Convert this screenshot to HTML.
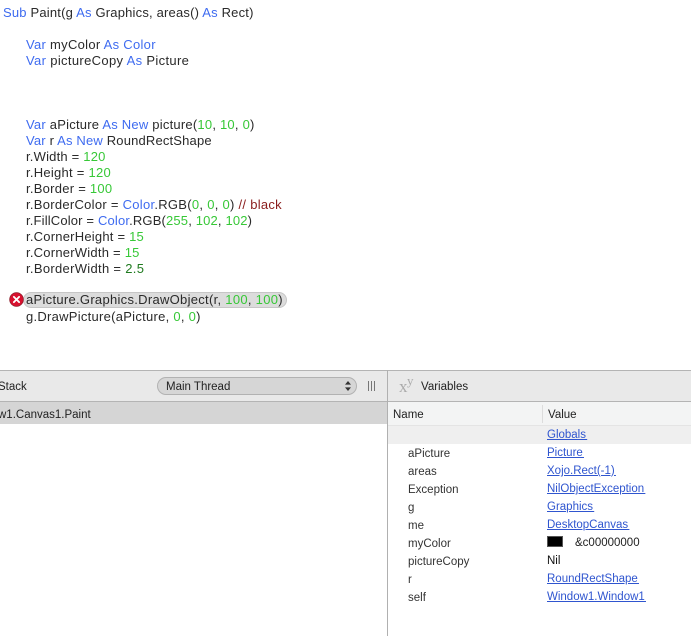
<!DOCTYPE html>
<html>
<head>
<meta charset="utf-8">
<style>
html,body{margin:0;padding:0;background:#fff;}
body{position:relative;width:691px;height:636px;overflow:hidden;font-family:"Liberation Sans",sans-serif;color:#222;}
.a{position:absolute;white-space:pre;}
.c{font-size:13px;line-height:16px;left:26px;color:#2a2a2a;}
.k{color:#3e6bf0;}
.n{color:#37c837;}
.d{color:#1f7a1f;}
.r{color:#8a1c1c;}
.s{font-size:11.5px;line-height:14px;color:#333;}
.l{left:408px;}
.v{left:547px;color:#2f55cf;text-decoration:underline;word-spacing:-2px;}
</style>
</head>
<body>
<div class="a c" style="left:3px;top:5px;letter-spacing:.19px"><span class="k">Sub</span> Paint(g <span class="k">As</span> Graphics, areas() <span class="k">As</span> Rect)</div>
<div class="a c" style="top:37px;letter-spacing:.29px"><span class="k">Var</span> myColor <span class="k">As Color</span></div>
<div class="a c" style="top:53px;letter-spacing:.34px"><span class="k">Var</span> pictureCopy <span class="k">As</span> Picture</div>
<div class="a c" style="top:117px;letter-spacing:.22px"><span class="k">Var</span> aPicture <span class="k">As New</span> picture(<span class="n">10</span>, <span class="n">10</span>, <span class="n">0</span>)</div>
<div class="a c" style="top:133px;letter-spacing:.17px"><span class="k">Var</span> r <span class="k">As New</span> RoundRectShape</div>
<div class="a c" style="top:149px;letter-spacing:.2px">r.Width = <span class="n">120</span></div>
<div class="a c" style="top:165px;letter-spacing:.26px">r.Height = <span class="n">120</span></div>
<div class="a c" style="top:181px;letter-spacing:.26px">r.Border = <span class="n">100</span></div>
<div class="a c" style="top:197px;letter-spacing:.28px">r.BorderColor = <span class="k">Color</span>.RGB(<span class="n">0</span>, <span class="n">0</span>, <span class="n">0</span>) <span class="r">// black</span></div>
<div class="a c" style="top:213px;letter-spacing:.16px">r.FillColor = <span class="k">Color</span>.RGB(<span class="n">255</span>, <span class="n">102</span>, <span class="n">102</span>)</div>
<div class="a c" style="top:229px;letter-spacing:.22px">r.CornerHeight = <span class="n">15</span></div>
<div class="a c" style="top:245px;letter-spacing:.23px">r.CornerWidth = <span class="n">15</span></div>
<div class="a c" style="top:261px;letter-spacing:.31px">r.BorderWidth = <span class="d">2.5</span></div>

<div class="a" style="left:23px;top:292px;width:262px;height:14px;background:#dcdcdc;border:1px solid #c6c6c6;border-radius:8px;"></div>
<svg class="a" style="left:8.500px;top:291.500px" width="15" height="15" viewBox="0 0 16 16">
<circle cx="8" cy="8" r="7.3" fill="#d8112f" stroke="#8f1f2c" stroke-width=".8"/>
<path d="M5.200 5.200L10.800 10.800M10.800 5.200L5.200 10.800" stroke="#fff" stroke-width="2" stroke-linecap="round"/>
</svg>
<div class="a c" style="top:292px;letter-spacing:.29px"><span>aPicture.Graphics.DrawObject(r, <span class="n">100</span>, <span class="n">100</span>)</span></div>
<div class="a c" style="top:309px;letter-spacing:.27px">g.DrawPicture(aPicture, <span class="n">0</span>, <span class="n">0</span>)</div>

<div class="a" style="left:0;top:370px;width:691px;height:1px;background:#b4b4b4;"></div>
<div class="a" style="left:0;top:371px;width:691px;height:30px;background:#e9e9e9;"></div>
<div class="a" style="left:0;top:401px;width:691px;height:1px;background:#b4b4b4;"></div>
<div class="a" style="left:0;top:402px;width:387px;height:22px;background:#d5d5d5;"></div>
<div class="a" style="left:388px;top:402px;width:303px;height:23px;background:#f3f4f4;"></div>
<div class="a" style="left:388px;top:425px;width:303px;height:1px;background:#e4e4e4;"></div>
<div class="a" style="left:388px;top:426px;width:303px;height:18px;background:#efefef;"></div>
<div class="a" style="left:542px;top:405px;width:1px;height:18px;background:#dcdcdc;"></div>
<div class="a" style="left:387px;top:370px;width:1px;height:266px;background:#b0b0b0;"></div>

<div class="a s" style="left:-2px;top:380px;color:#222">Stack</div>
<div class="a" style="left:157px;top:377px;width:198px;height:16px;background:#d6d6d6;border:1px solid #b2b2b2;border-radius:9px;"></div>
<div class="a s" style="left:166px;top:380px;color:#222">Main Thread</div>
<svg class="a" style="left:344px;top:380px" width="8" height="12" viewBox="0 0 8 12"><path d="M4 1L7 4.600H1ZM4 11L1 7.400H7Z" fill="#333"/></svg>
<svg class="a" style="left:367px;top:380px" width="10" height="12" viewBox="0 0 10 12"><path d="M1.500 1V11M4.500 1V11M7.500 1V11" stroke="#777" stroke-width="1" fill="none"/></svg>
<div class="a s" style="left:-2px;top:408px;color:#222">w1.Canvas1.Paint</div>

<div class="a" style="left:399px;top:378px;font-family:'Liberation Serif',serif;font-size:17px;line-height:18px;color:#aaa">x</div>
<div class="a" style="left:407px;top:374px;font-family:'Liberation Serif',serif;font-size:13px;line-height:14px;color:#aaa">y</div>
<div class="a s" style="left:421px;top:380px;color:#222">Variables</div>
<div class="a s" style="left:393px;top:408px;color:#222">Name</div>
<div class="a s" style="left:548px;top:408px;color:#222">Value</div>

<div class="a s v" style="top:428px">Globals </div>
<div class="a s l" style="top:447px">aPicture</div><div class="a s v" style="top:446px">Picture </div>
<div class="a s l" style="top:465px">areas</div><div class="a s v" style="top:464px">Xojo.Rect(-1) </div>
<div class="a s l" style="top:483px">Exception</div><div class="a s v" style="top:482px">NilObjectException </div>
<div class="a s l" style="top:501px">g</div><div class="a s v" style="top:500px">Graphics </div>
<div class="a s l" style="top:519px">me</div><div class="a s v" style="top:518px">DesktopCanvas </div>
<div class="a s l" style="top:537px">myColor</div>
<div class="a" style="left:547px;top:536px;width:14px;height:9px;background:#000;border:1px solid #555;"></div>
<div class="a s" style="left:575px;top:536px;color:#222">&amp;c00000000</div>
<div class="a s l" style="top:555px">pictureCopy</div><div class="a s" style="left:547px;top:554px;color:#111">Nil</div>
<div class="a s l" style="top:573px">r</div><div class="a s v" style="top:572px">RoundRectShape </div>
<div class="a s l" style="top:591px">self</div><div class="a s v" style="top:590px">Window1.Window1 </div>
</body>
</html>
